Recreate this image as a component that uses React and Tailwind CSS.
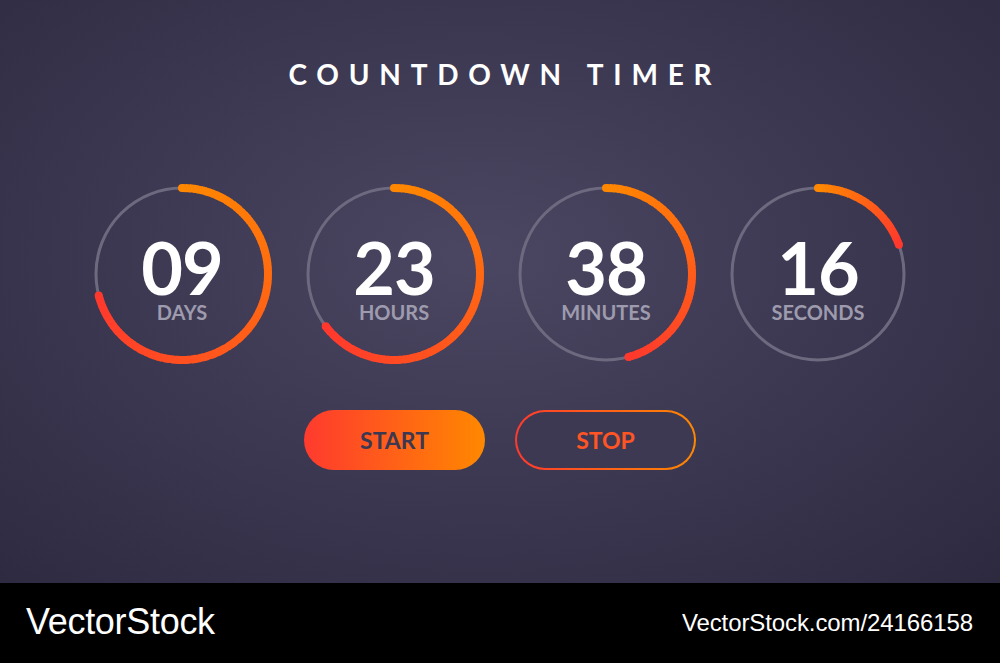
import React from "react";

const ORANGE = [255, 136, 0];
const RED = [255, 56, 46];
const lerp = (t) =>
  `rgb(${ORANGE.map((c, i) => Math.round(c + (RED[i] - c) * t)).join(",")})`;

function Ring({ frac }) {
  const r = 86;
  const c = 95;
  const pt = (deg) => {
    const a = (deg * Math.PI) / 180;
    return [c + r * Math.sin(a), c - r * Math.cos(a)];
  };
  const total = frac * 360;
  const N = Math.max(10, Math.round(frac * 140));
  const segs = [];
  for (let i = 0; i < N; i++) {
    const a0 = (total * i) / N;
    const a1 = Math.min(total, (total * (i + 1)) / N + 0.6);
    const [x0, y0] = pt(a0);
    const [x1, y1] = pt(a1);
    segs.push(
      <path
        key={i}
        d={`M${x0} ${y0} A${r} ${r} 0 0 1 ${x1} ${y1}`}
        stroke={lerp((i + 0.5) / N)}
        strokeWidth="8"
        fill="none"
      />
    );
  }
  const [sx, sy] = pt(0);
  const [ex, ey] = pt(total);
  return (
    <svg width="190" height="190" viewBox="0 0 190 190" className="absolute inset-0">
      <circle cx={c} cy={c} r={r} stroke="#6d6a80" strokeWidth="3" fill="none" />
      {segs}
      <circle cx={sx} cy={sy} r="4" fill={lerp(0)} />
      <circle cx={ex} cy={ey} r="4" fill={lerp(1)} />
    </svg>
  );
}

function Unit({ value, label, frac }) {
  return (
    <div className="relative w-[190px] h-[190px] flex flex-col items-center pt-[58px]">
      <Ring frac={frac} />
      <div className="relative text-[72px] leading-[60px] font-bold text-white tracking-[-1px]">
        {value}
      </div>
      <div className="relative mt-[5px] text-[20px] leading-[20px] font-bold text-[#9d9bad]">
        {label}
      </div>
    </div>
  );
}

export default function App() {
  return (
    <div
      className="w-[1000px] h-[663px] flex flex-col overflow-hidden"
      style={{ fontFamily: "Lato, 'Open Sans', sans-serif" }}
    >
      <div className="h-[583px] flex flex-col items-center bg-[radial-gradient(ellipse_75%_80%_at_48%_44%,#4b4762_0%,#3d3953_45%,#2c293f_100%)]">
        <h1 className="mt-[57px] text-[28px] leading-[34px] font-bold text-white tracking-[0.35em] pl-[0.35em]">
          COUNTDOWN TIMER
        </h1>
        <div className="mt-[88px] flex gap-[22px]">
          <Unit value="09" label="DAYS" frac={0.71} />
          <Unit value="23" label="HOURS" frac={0.646} />
          <Unit value="38" label="MINUTES" frac={0.458} />
          <Unit value="16" label="SECONDS" frac={0.195} />
        </div>
        <div className="mt-[41px] flex gap-[30px]">
          <button className="w-[181px] h-[60px] rounded-full bg-[linear-gradient(90deg,#ff3a2e,#ff8800)] text-[23px] font-bold text-[#3d3852]">
            START
          </button>
          <div className="w-[181px] h-[60px] rounded-full p-[2px] bg-[linear-gradient(90deg,#ff3a2e,#ff8800)]">
            <div className="w-full h-full rounded-full bg-[#3d3953] flex items-center justify-center text-[23px] font-bold text-[#ff5524]">
              STOP
            </div>
          </div>
        </div>
      </div>
      <div
        className="flex-1 bg-black flex items-center justify-between pl-[26px] pr-[27px] text-white"
        style={{ fontFamily: "'Liberation Sans', Arial, sans-serif" }}
      >
        <span className="text-[36px] tracking-[-0.3px] pb-[2px]">VectorStock</span>
        <span className="text-[24px] tracking-[-0.1px]">VectorStock.com/24166158</span>
      </div>
    </div>
  );
}
